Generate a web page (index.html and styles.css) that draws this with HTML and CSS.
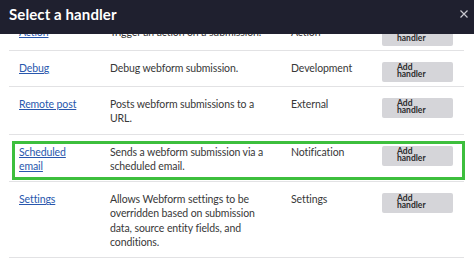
FILE: index.html
```html
<!DOCTYPE html>
<html>
<head>
<meta charset="utf-8">
<link rel="stylesheet" href="styles.css">
</head>
<body>
<div class="dialog">
  <div class="titlebar">
    <h1 class="title">Select a handler</h1>
    <svg class="close" width="8" height="8" viewBox="0 0 8 8" aria-label="Close">
      <path d="M0.5 0.5 L7.5 7.5 M7.5 0.5 L0.5 7.5" stroke="#c9c9d0" stroke-width="1.2" fill="none"/>
    </svg>
  </div>
  <div class="content">
    <div class="scroller">
      <table class="handlers">
        <tbody>
          <tr>
            <td class="c-name"><a href="#">Action</a></td>
            <td class="c-desc">Trigger an action on a submission.</td>
            <td class="c-cat">Action</td>
            <td class="c-op"><span class="btn">Add<br>handler</span></td>
          </tr>
          <tr>
            <td class="c-name"><a href="#">Debug</a></td>
            <td class="c-desc">Debug webform submission.</td>
            <td class="c-cat">Development</td>
            <td class="c-op"><span class="btn">Add<br>handler</span></td>
          </tr>
          <tr>
            <td class="c-name"><a href="#">Remote post</a></td>
            <td class="c-desc">Posts webform submissions to a<br>URL.</td>
            <td class="c-cat">External</td>
            <td class="c-op"><span class="btn">Add<br>handler</span></td>
          </tr>
          <tr>
            <td class="c-name"><a href="#">Scheduled<br>email</a></td>
            <td class="c-desc">Sends a webform submission via a<br>scheduled email.</td>
            <td class="c-cat">Notification</td>
            <td class="c-op"><span class="btn">Add<br>handler</span></td>
          </tr>
          <tr>
            <td class="c-name"><a href="#">Settings</a></td>
            <td class="c-desc">Allows Webform settings to be<br>overridden based on submission<br>data, source entity fields, and<br>conditions.</td>
            <td class="c-cat">Settings</td>
            <td class="c-op"><span class="btn">Add<br>handler</span></td>
          </tr>
        </tbody>
      </table>
      <div class="highlight"></div>
    </div>
  </div>
</div>
</body>
</html>
```
FILE: styles.css
```css
html, body {
  margin: 0;
  padding: 0;
  background: #ffffff;
}
body {
  font-family: "Lato", "Open Sans", sans-serif;
  color: #383838;
  width: 474px;
  height: 258px;
  overflow: hidden;
}
.dialog {
  display: flex;
  flex-direction: column;
  height: 258px;
}
.titlebar {
  flex: 0 0 34px;
  background: #1f202f;
  display: flex;
  align-items: center;
  justify-content: space-between;
  padding: 0 6px 0 9px;
  position: relative;
  z-index: 2;
}
.title {
  margin: 0;
  font-size: 15px;
  font-weight: 700;
  color: #ffffff;
  letter-spacing: 0.1px;
  padding-bottom: 6px;
}
.close {
  display: block;
  margin-bottom: 7px;
}
.content {
  flex: 1;
  overflow: hidden;
  padding: 0 10px 0 9px;
}
.scroller {
  margin-top: -19px;
  position: relative;
}
.handlers {
  width: 455px;
  border-collapse: collapse;
  table-layout: fixed;
  font-size: 10.5px;
  letter-spacing: -0.1px;
  line-height: 14.3px;
  white-space: nowrap;
}
.handlers td {
  border-bottom: 1px solid #e2e2e4;
  padding: 10px 10px 8px 10px;
  vertical-align: top;
  text-align: left;
}
.c-name { width: 71px; }
.c-desc { width: 161px; }
.c-cat { width: 71px; }
.c-op { width: 71px; }
.handlers td.c-op { padding: 11px 11px 4px 10px; }
.handlers a {
  color: #2857ad;
  text-decoration: underline;
}
.btn {
  display: block;
  box-sizing: border-box;
  width: 71px;
  height: 20px;
  padding: 2px 15px 0 15px;
  background: #d5d5d9;
  border-radius: 2px;
  color: #2b2b2b;
  font-size: 8.5px;
  font-weight: 700;
  letter-spacing: 0;
  line-height: 7px;
}
.highlight {
  position: absolute;
  box-sizing: border-box;
  left: 3px;
  top: 126px;
  width: 453px;
  height: 39px;
  border: 3px solid #3dbf3d;
  pointer-events: none;
}
```
